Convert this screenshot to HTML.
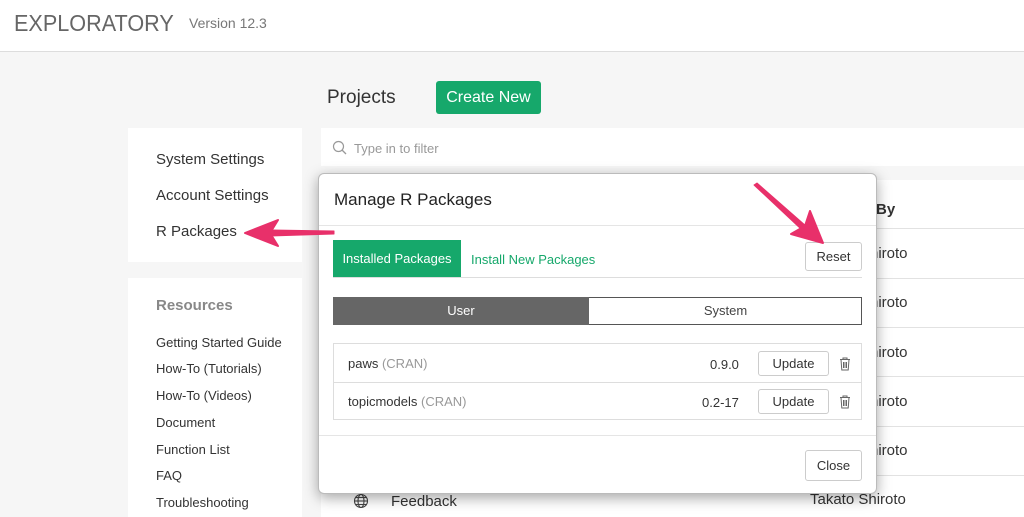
<!DOCTYPE html>
<html><head><style>
*{box-sizing:border-box;margin:0;padding:0}
body{width:1024px;height:517px;overflow:hidden;background:#f6f6f6;font-family:"Liberation Sans",sans-serif;color:#333;position:relative}
.a{position:absolute}
.hdr{left:0;top:0;width:1024px;height:52px;background:#fff;border-bottom:1px solid #ddd}
.box{background:#fff}
.sb{font-size:15px;color:#333}
.sm{font-size:13px;color:#333}
.row{left:321px;width:703px;border-top:1px solid #e2e2e2}
.btn{background:#fff;border:1px solid #ccc;border-radius:3px;font-size:13px;color:#333;text-align:center}
</style></head><body>
<div class="a hdr"></div>
<div class="a" style="left:14px;top:10px;font-size:23px;color:#666;transform:scaleX(0.94);transform-origin:0 0;white-space:nowrap">EXPLORATORY</div>
<div class="a" style="left:189px;top:15px;font-size:14px;color:#777">Version 12.3</div>
<div class="a" style="left:327px;top:87px;font-size:19px;color:#333">Projects</div>
<div class="a" style="left:436px;top:81px;width:105px;height:33px;background:#16a86b;border-radius:3px;color:#fff;font-size:16px;line-height:33px;text-align:center">Create New</div>
<div class="a box" style="left:128px;top:128px;width:174px;height:134px"></div>
<div class="a box" style="left:128px;top:278px;width:174px;height:239px"></div>
<div class="a sb" style="left:156px;top:151px">System Settings</div>
<div class="a sb" style="left:156px;top:187px">Account Settings</div>
<div class="a sb" style="left:156px;top:223px">R Packages</div>
<div class="a" style="left:156px;top:297px;font-size:15px;color:#888;font-weight:bold">Resources</div>
<div class="a sm" style="left:156px;top:335px">Getting Started Guide</div>
<div class="a sm" style="left:156px;top:361px">How-To (Tutorials)</div>
<div class="a sm" style="left:156px;top:388px">How-To (Videos)</div>
<div class="a sm" style="left:156px;top:415px">Document</div>
<div class="a sm" style="left:156px;top:442px">Function List</div>
<div class="a sm" style="left:156px;top:468px">FAQ</div>
<div class="a sm" style="left:156px;top:495px">Troubleshooting</div>
<div class="a box" style="left:321px;top:128px;width:703px;height:38px"></div>
<svg class="a" style="left:332px;top:140px" width="16" height="16"><circle cx="6.5" cy="6.5" r="5" fill="none" stroke="#999" stroke-width="1.2"/><line x1="10" y1="10" x2="14" y2="14" stroke="#999" stroke-width="1.3"/></svg>
<div class="a" style="left:354px;top:141px;font-size:13px;color:#999">Type in to filter</div>
<div class="a box" style="left:321px;top:180px;width:703px;height:337px"></div>
<div class="a" style="left:876px;top:201px;font-size:15px;font-weight:bold;color:#333">By</div>
<div class="a row" style="top:228px"></div><div class="a row" style="top:278px"></div><div class="a row" style="top:327px"></div><div class="a row" style="top:376px"></div><div class="a row" style="top:426px"></div><div class="a row" style="top:475px"></div>
<div class="a" style="left:860px;top:245px;font-size:15px">Shiroto</div>
<div class="a" style="left:860px;top:294px;font-size:15px">Shiroto</div>
<div class="a" style="left:860px;top:344px;font-size:15px">Shiroto</div>
<div class="a" style="left:860px;top:393px;font-size:15px">Shiroto</div>
<div class="a" style="left:860px;top:442px;font-size:15px">Shiroto</div>
<div class="a" style="left:810px;top:491px;font-size:15px">Takato Shiroto</div>
<svg class="a" style="left:353px;top:493px" width="16" height="16"><g fill="none" stroke="#444" stroke-width="1.1"><circle cx="8" cy="8" r="6.5"/><ellipse cx="8" cy="8" rx="3" ry="6.5"/><line x1="1.5" y1="8" x2="14.5" y2="8"/><line x1="2.5" y1="4.5" x2="13.5" y2="4.5"/><line x1="2.5" y1="11.5" x2="13.5" y2="11.5"/></g></svg>
<div class="a" style="left:391px;top:493px;font-size:15px">Feedback</div>
<div class="a" style="left:318px;top:173px;width:559px;height:321px;background:#fff;border:1px solid #bbb;border-radius:6px;box-shadow:0 4px 14px rgba(0,0,0,.35)"></div>
<div class="a" style="left:334px;top:190px;font-size:17px;color:#222">Manage R Packages</div>
<div class="a" style="left:319px;top:225px;width:557px;border-top:1px solid #e5e5e5"></div>
<div class="a" style="left:333px;top:240px;width:128px;height:37px;background:#16a86b;color:#fff;font-size:13px;line-height:37px;text-align:center">Installed Packages</div>
<div class="a" style="left:471px;top:252px;font-size:13px;color:#16a86b">Install New Packages</div>
<div class="a" style="left:333px;top:277px;width:529px;border-top:1px solid #ddd"></div>
<div class="a btn" style="left:805px;top:242px;width:57px;height:29px;line-height:27px">Reset</div>
<div class="a" style="left:333px;top:297px;width:529px;height:28px;border:1px solid #555;background:#fff"></div>
<div class="a" style="left:333px;top:297px;width:256px;height:28px;background:#666;color:#fff;font-size:13px;line-height:28px;text-align:center">User</div>
<div class="a" style="left:589px;top:297px;width:273px;height:28px;font-size:13px;line-height:28px;text-align:center;color:#444">System</div>
<div class="a" style="left:333px;top:343px;width:529px;height:77px;border:1px solid #ddd"></div>
<div class="a" style="left:334px;top:382px;width:527px;border-top:1px solid #ddd"></div>
<div class="a" style="left:348px;top:356px;font-size:13px">paws <span style="color:#999">(CRAN)</span></div>
<div class="a" style="left:348px;top:394px;font-size:13px">topicmodels <span style="color:#999">(CRAN)</span></div>
<div class="a" style="left:710px;top:357px;font-size:13px">0.9.0</div>
<div class="a" style="left:702px;top:395px;font-size:13px">0.2-17</div>
<div class="a btn" style="left:758px;top:351px;width:71px;height:25px;line-height:23px">Update</div>
<div class="a btn" style="left:758px;top:389px;width:71px;height:25px;line-height:23px">Update</div>
<svg class="a" style="left:839px;top:357px" width="12" height="14"><g fill="none" stroke="#666" stroke-width="1"><path d="M1 2.5H11M4 2.5V1H8V2.5M2 2.5L2.8 13H9.2L10 2.5M4.5 5V11M6 5V11M7.5 5V11"/></g></svg>
<svg class="a" style="left:839px;top:395px" width="12" height="14"><g fill="none" stroke="#666" stroke-width="1"><path d="M1 2.5H11M4 2.5V1H8V2.5M2 2.5L2.8 13H9.2L10 2.5M4.5 5V11M6 5V11M7.5 5V11"/></g></svg>
<div class="a" style="left:319px;top:435px;width:557px;border-top:1px solid #e5e5e5"></div>
<div class="a btn" style="left:805px;top:450px;width:57px;height:31px;line-height:29px">Close</div>
<svg class="a" style="left:0;top:0" width="1024" height="517">
<g fill="#e8306a" stroke="#e8306a" stroke-linejoin="round">
<path d="M334 231 L270 230 L270 236 L334 234 Z" stroke-width="1"/>
<path d="M245 233 L278 220 L270 233 L278 246 Z" stroke-width="2"/>
<path d="M754 185 L757 183 L806 226 L802 230 Z" stroke-width="1"/>
<path d="M823 243 L791 234 L805 226 L810 211 Z" stroke-width="2"/>
</g></svg>
</body></html>
